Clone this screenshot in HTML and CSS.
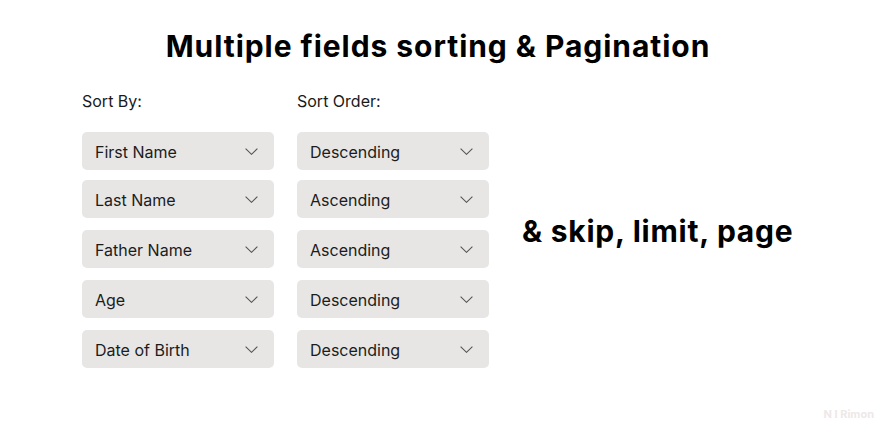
FILE: index.html
```html
<!DOCTYPE html>
<html lang="en">
<head>
<meta charset="utf-8">
<title>Multiple fields sorting &amp; Pagination</title>
<link rel="stylesheet" href="styles.css">
</head>
<body>
<main class="page">
  <h1 class="title">Multiple fields sorting &amp; Pagination</h1>
  <div class="content">
    <section class="column">
      <div class="label">Sort By:</div>
      <div class="rows">
        <div class="select"><span>First Name</span><svg class="chev" width="13" height="7" viewBox="0 0 13 7"><path d="M0.6 0.6 L6.5 6.3 L12.4 0.6"/></svg></div>
        <div class="select first-gap"><span>Last Name</span><svg class="chev" width="13" height="7" viewBox="0 0 13 7"><path d="M0.6 0.6 L6.5 6.3 L12.4 0.6"/></svg></div>
        <div class="select"><span>Father Name</span><svg class="chev" width="13" height="7" viewBox="0 0 13 7"><path d="M0.6 0.6 L6.5 6.3 L12.4 0.6"/></svg></div>
        <div class="select"><span>Age</span><svg class="chev" width="13" height="7" viewBox="0 0 13 7"><path d="M0.6 0.6 L6.5 6.3 L12.4 0.6"/></svg></div>
        <div class="select"><span>Date of Birth</span><svg class="chev" width="13" height="7" viewBox="0 0 13 7"><path d="M0.6 0.6 L6.5 6.3 L12.4 0.6"/></svg></div>
      </div>
    </section>
    <section class="column">
      <div class="label">Sort Order:</div>
      <div class="rows">
        <div class="select"><span>Descending</span><svg class="chev" width="13" height="7" viewBox="0 0 13 7"><path d="M0.6 0.6 L6.5 6.3 L12.4 0.6"/></svg></div>
        <div class="select first-gap"><span>Ascending</span><svg class="chev" width="13" height="7" viewBox="0 0 13 7"><path d="M0.6 0.6 L6.5 6.3 L12.4 0.6"/></svg></div>
        <div class="select"><span>Ascending</span><svg class="chev" width="13" height="7" viewBox="0 0 13 7"><path d="M0.6 0.6 L6.5 6.3 L12.4 0.6"/></svg></div>
        <div class="select"><span>Descending</span><svg class="chev" width="13" height="7" viewBox="0 0 13 7"><path d="M0.6 0.6 L6.5 6.3 L12.4 0.6"/></svg></div>
        <div class="select"><span>Descending</span><svg class="chev" width="13" height="7" viewBox="0 0 13 7"><path d="M0.6 0.6 L6.5 6.3 L12.4 0.6"/></svg></div>
      </div>
    </section>
    <div class="extra">&amp; skip, limit, page</div>
  </div>
  <div class="credit">N I Rimon</div>
</main>
</body>
</html>
```

FILE: styles.css
```css
html, body {
  margin: 0;
  padding: 0;
  background: #ffffff;
}

body {
  font-family: Inter, "Noto Sans", "Liberation Sans", sans-serif;
  color: #111111;
  width: 876px;
  height: 421px;
  overflow: hidden;
}

.page {
  position: relative;
  height: 421px;
  padding-top: 28px;
  box-sizing: border-box;
}

.title {
  margin: 0;
  font-size: 30px;
  line-height: 36px;
  font-weight: 700;
  text-align: center;
  color: #000000;
  letter-spacing: 0.95px;
}

.content {
  display: flex;
  align-items: flex-start;
  padding-left: 82px;
  margin-top: 28px;
}

.column {
  width: 192px;
  display: flex;
  flex-direction: column;
}

.column + .column {
  margin-left: 23px;
}

.label {
  font-size: 16px;
  line-height: 19px;
  color: #1a1a1a;
  margin-bottom: 21px;
}

.rows {
  display: flex;
  flex-direction: column;
  gap: 12px;
}

.rows .first-gap {
  margin-top: -2px;
}

.select {
  height: 38px;
  box-sizing: border-box;
  padding: 2px 16px 0 13px;
  background: #e7e6e5;
  border-radius: 5px;
  display: flex;
  align-items: center;
  justify-content: space-between;
  font-size: 16px;
  line-height: 36px;
  color: #1c1c1c;
}

.chev {
  display: block;
  margin-top: -2px;
  fill: none;
  stroke: #555555;
  stroke-width: 1.1;
}

.extra {
  margin-left: 33px;
  padding-top: 121px;
  font-size: 30px;
  line-height: 36px;
  font-weight: 700;
  color: #000000;
  letter-spacing: 0.75px;
}

.credit {
  position: absolute;
  right: 2px;
  bottom: 0;
  font-size: 11px;
  line-height: 13px;
  font-weight: 700;
  color: #eee8e8;
}
```
